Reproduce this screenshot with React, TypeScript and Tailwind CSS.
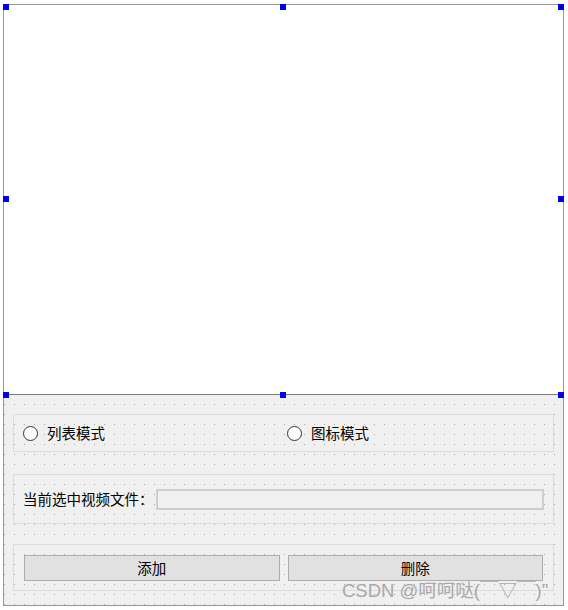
const font = "font-['Microsoft_YaHei','Noto_Sans_CJK_SC',sans-serif]";

// designer grid dots, 10px spacing
const dots =
    "bg-[linear-gradient(to_bottom,transparent_1px,#f0f0f0_1px),linear-gradient(to_right,#a8a8a8_1px,#f0f0f0_1px)] bg-[length:10px_10px] bg-[position:0px_-1px]";

function Handle({className}: {className: string}) {
    return (
        <div
            className={`absolute w-[6px] h-[6px] bg-[#0000ff] flex items-center justify-center ${className}`}
        >
            <div className="w-[2px] h-[2px] bg-[#000080]" />
        </div>
    );
}

function Radio({label}: {label: string}) {
    return (
        <label className="flex items-center gap-[9px]">
            <span className="w-[15px] h-[15px] rounded-full border border-[#333] bg-white" />
            <span className="text-[14.5px] leading-none text-black">{label}</span>
        </label>
    );
}

function Button({label}: {label: string}) {
    return (
        <button className="h-[26px] bg-[#e1e1e1] border border-[#adadad] text-[14.5px] text-black flex items-center justify-center">
            {label}
        </button>
    );
}

export default function App() {
    return (
        <div className={`w-[568px] h-[610px] bg-white pt-[4px] pl-[3px] ${font}`}>
            <div className={`relative w-[561px] h-[602px] border border-[#9a9a9a] ${dots}`}>
                {/* list widget (selected) */}
                <div className="h-[390px] bg-white border-b border-[#7a7a7a]" />

                <Handle className="left-[-1px] top-[-1px]" />
                <Handle className="left-[276px] top-[-1px]" />
                <Handle className="right-[-1px] top-[-1px]" />
                <Handle className="left-[-1px] top-[191px]" />
                <Handle className="right-[-1px] top-[191px]" />
                <Handle className="left-[-1px] top-[387px]" />
                <Handle className="left-[276px] top-[387px]" />
                <Handle className="right-[-1px] top-[387px]" />

                <div className="flex flex-col pl-[9px] pt-[19px]">
                    {/* mode */}
                    <div className="w-[541px] h-[38px] border border-[#dcdcdc] grid grid-cols-[264px_1fr] items-center pl-[9px]">
                        <Radio label="列表模式" />
                        <Radio label="图标模式" />
                    </div>

                    {/* current file */}
                    <div className="mt-[22px] w-[541px] h-[50px] border border-[#dcdcdc] flex items-center pl-[9px] pr-[9px] gap-[2px]">
                        <span className="text-[14.5px] leading-none text-black whitespace-nowrap">
                            当前选中视频文件：
                        </span>
                        <div className="flex-1 h-[21px] border-2 border-[#cfcfcf] bg-[#f0f0f0]" />
                    </div>

                    {/* actions */}
                    <div className="mt-[20px] w-[541px] h-[47px] border border-[#dcdcdc] grid grid-cols-2 gap-[8px] items-center px-[10px]">
                        <Button label="添加" />
                        <Button label="删除" />
                    </div>
                </div>

                {/* watermark */}
                <div className="absolute left-[338px] top-[577px] text-[18.5px] leading-none text-[#a9a9a9] whitespace-nowrap font-['Liberation_Sans','Noto_Sans_CJK_SC',sans-serif]">
                    {"CSDN @呵呵哒(\uFFE3\u25BD\uFFE3)\""}
                </div>
            </div>
        </div>
    );
}
